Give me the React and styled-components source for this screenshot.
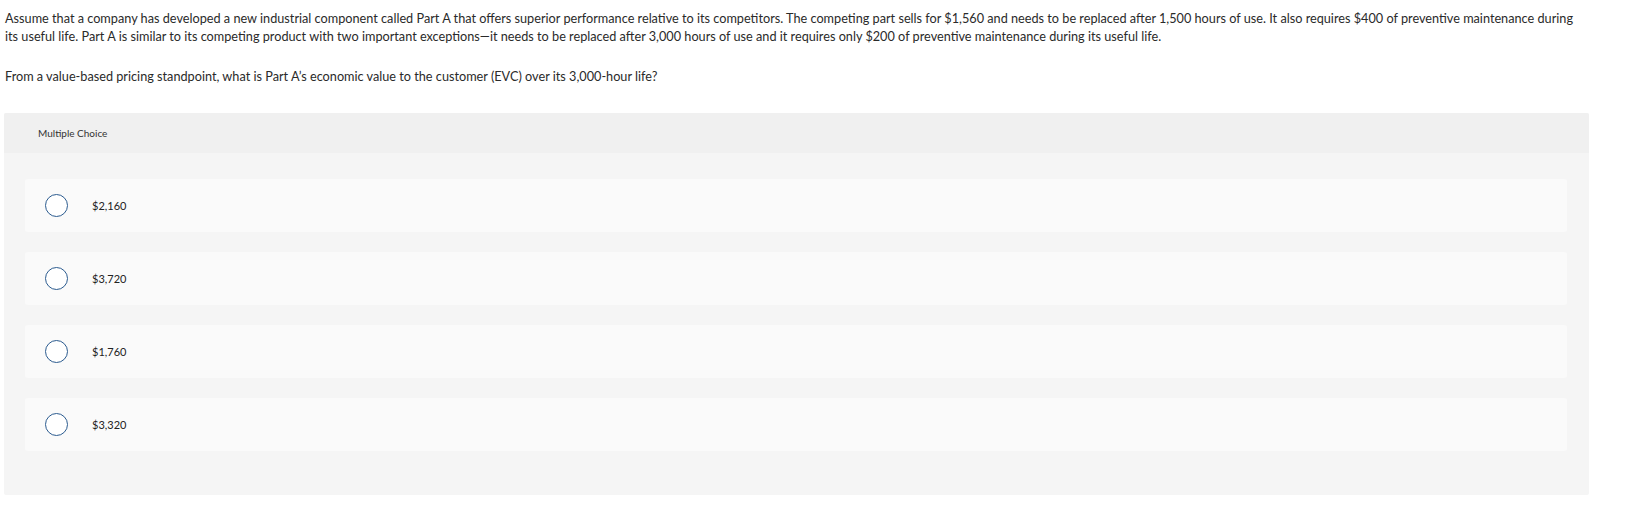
import React from 'react';
import styled, { createGlobalStyle } from 'styled-components';

const GlobalStyle = createGlobalStyle`
    body {
        margin: 0;
        background: #ffffff;
        font-family: Lato, "Open Sans", "Liberation Sans", sans-serif;
        color: #2a2a2a;
    }
`

const Page = styled.div`
    padding: 9px 41px 20px 4px;
`

const Question = styled.div`
    padding-left: 1px;
    font-size: 12.7px;
    line-height: 18px;
    p {
        margin: 0 0 22px 0;
    }
`

const Panel = styled.div`
    margin-top: 28px;
    background: #f5f5f5;
    border-radius: 2px;
    padding-bottom: 44px;
`

const PanelHeader = styled.div`
    height: 40px;
    background: #f0f0f0;
    display: flex;
    align-items: center;
    padding-left: 34px;
    font-size: 10px;
    color: #333;
    border-radius: 2px 2px 0 0;
`

const Options = styled.div`
    display: flex;
    flex-direction: column;
    gap: 20px;
    padding: 26px 22px 0 21px;
`

const Option = styled.label`
    height: 53px;
    background: #fafafa;
    border-radius: 3px;
    display: flex;
    align-items: center;
    padding-left: 20px;
    font-size: 11px;
    color: #222;
    cursor: pointer;
`

const Radio = styled.span`
    width: 21px;
    height: 21px;
    border: 1.3px solid #2b5b8f;
    border-radius: 50%;
    background: #fff;
    margin-right: 24px;
    flex-shrink: 0;
`

const choices = ['$2,160', '$3,720', '$1,760', '$3,320'];

export default function App() {
    return (
        <Page>
            <GlobalStyle />
            <Question>
                <p>Assume that a company has developed a new industrial component called Part A that offers superior performance relative to its competitors. The competing part sells for $1,560 and needs to be replaced after 1,500 hours of use. It also requires $400 of preventive maintenance during its useful life. Part A is similar to its competing product with two important exceptions—it needs to be replaced after 3,000 hours of use and it requires only $200 of preventive maintenance during its useful life.</p>
                <p>From a value-based pricing standpoint, what is Part A’s economic value to the customer (EVC) over its 3,000-hour life?</p>
            </Question>
            <Panel>
                <PanelHeader>Multiple Choice</PanelHeader>
                <Options>
                    {choices.map((c) => (
                        <Option key={c}>
                            <Radio />
                            {c}
                        </Option>
                    ))}
                </Options>
            </Panel>
        </Page>
    );
}
